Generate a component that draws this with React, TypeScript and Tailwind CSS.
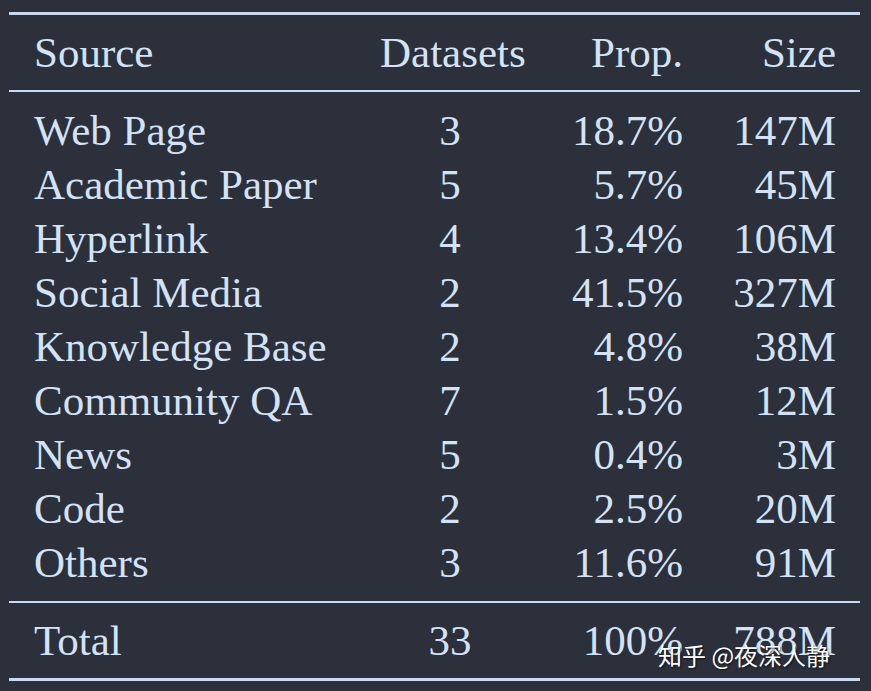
import React from 'react';

const ROWS = [
  { source: 'Web Page', datasets: '3', prop: '18.7%', size: '147M' },
  { source: 'Academic Paper', datasets: '5', prop: '5.7%', size: '45M' },
  { source: 'Hyperlink', datasets: '4', prop: '13.4%', size: '106M' },
  { source: 'Social Media', datasets: '2', prop: '41.5%', size: '327M' },
  { source: 'Knowledge Base', datasets: '2', prop: '4.8%', size: '38M' },
  { source: 'Community QA', datasets: '7', prop: '1.5%', size: '12M' },
  { source: 'News', datasets: '5', prop: '0.4%', size: '3M' },
  { source: 'Code', datasets: '2', prop: '2.5%', size: '20M' },
  { source: 'Others', datasets: '3', prop: '11.6%', size: '91M' },
];

const grid = 'grid grid-cols-[346px_140px_163px_153px] pl-[25px]';

const Row: React.FC<{ cells: string[]; h: string }> = ({ cells, h }) => (
  <div className={`${grid} ${h} items-center`}>
    <span className="text-left">{cells[0]}</span>
    <span className="text-center">{cells[1]}</span>
    <span className="text-right">{cells[2]}</span>
    <span className="text-right">{cells[3]}</span>
  </div>
);

const App: React.FC = () => {
  return (
    <div className="relative w-[871px] h-[691px] bg-[#2b303b] text-[#d3e2f6] [font-family:'Liberation_Serif','Times_New_Roman',serif] text-[43px] leading-[54px] pt-[12px] pl-[9px] overflow-hidden">
      <div className="w-[851px] h-[3px] bg-[#c9d9f1]" />
      <Row cells={['Source', 'Datasets', 'Prop.', 'Size']} h="h-[75px]" />
      <div className="w-[851px] h-[2px] bg-[#c9d9f1]" />
      <div className="pt-[12px] pb-[11px]">
        {ROWS.map((r) => (
          <Row key={r.source} cells={[r.source, r.datasets, r.prop, r.size]} h="h-[54px]" />
        ))}
      </div>
      <div className="w-[851px] h-[2px] bg-[#c9d9f1]" />
      <Row cells={['Total', '33', '100%', '788M']} h="h-[75px]" />
      <div className="w-[851px] h-[3px] bg-[#c9d9f1]" />

      <div className="absolute left-[658px] top-[638px] text-white text-[24px] leading-[34px] [font-family:'Noto_Sans_CJK_SC',sans-serif] [text-shadow:1px_1px_2px_rgba(0,0,0,0.7)]">
        知乎 @夜深人静
      </div>
    </div>
  );
};

export default App;
